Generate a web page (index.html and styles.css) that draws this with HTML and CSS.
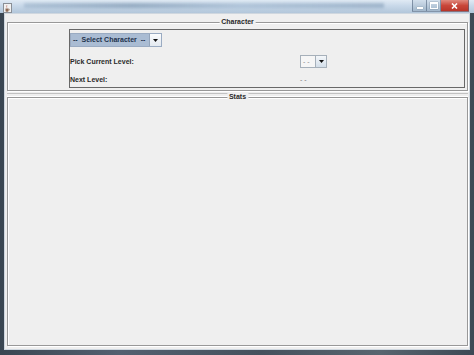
FILE: index.html
```html
<!DOCTYPE html>
<html>
<head>
<meta charset="utf-8">
<link rel="stylesheet" href="styles.css">
</head>
<body>
<div class="window">
  <div class="titlebar">
    <svg class="app-icon" width="9" height="10" viewBox="0 0 9 10">
      <rect x="0.5" y="0.5" width="8" height="9" fill="#f1f1f1" stroke="#8a8f96"/>
      <path d="M2.5 5.5h3v2.2a1 1 0 0 1-1 1h-1a1 1 0 0 1-1-1z" fill="#8d6a55"/>
      <path d="M5.5 6.2h0.8v1h-0.8" fill="none" stroke="#8d6a55" stroke-width="0.6"/>
      <path d="M3.6 2.2c0.8 0.8-0.6 1.4 0.2 2.4" fill="none" stroke="#b0574a" stroke-width="0.6"/>
    </svg>
    <div class="title-blur"></div>
    <div class="controls">
      <span class="ctl ctl-min"><span class="glyph-min"></span></span>
      <span class="ctl ctl-max"><span class="glyph-max"></span></span>
      <span class="ctl ctl-close">
        <svg width="7" height="6" viewBox="0 0 7 6"><path d="M1 0.5l5 5M6 0.5l-5 5" stroke="#fff" stroke-width="1.6"/></svg>
      </span>
    </div>
  </div>
  <div class="client">
    <div class="group group-character">
      <span class="group-title">Character</span>
      <div class="char-panel">
        <div class="combo combo-select">
          <span class="combo-label">--&nbsp; Select Character &nbsp;--</span>
          <span class="combo-arrow">
            <svg width="5" height="3" viewBox="0 0 5 3"><path d="M0 0h5L2.5 3z" fill="#111"/></svg>
          </span>
        </div>
        <span class="cell-empty"></span>
        <span class="field-label label-current">Pick Current Level:</span>
        <div class="combo combo-level">
          <span class="combo-label">- -</span>
          <span class="combo-arrow">
            <svg width="5" height="3" viewBox="0 0 5 3"><path d="M0 0h5L2.5 3z" fill="#111"/></svg>
          </span>
        </div>
        <span class="field-label label-next">Next Level:</span>
        <span class="next-value">- -</span>
      </div>
    </div>
    <div class="divider"></div>
    <div class="group group-stats">
      <span class="group-title">Stats</span>
    </div>
  </div>
</div>
</body>
</html>
```

FILE: styles.css
```css
html, body {
  margin: 0;
  padding: 0;
  width: 474px;
  height: 355px;
  overflow: hidden;
}

body {
  font-family: "Liberation Sans", Arial, sans-serif;
  background: #4b5763;
}

.window {
  display: flex;
  flex-direction: column;
  width: 474px;
  height: 355px;
  background: linear-gradient(to right, #3a4652 0%, #536070 25%, #45515d 55%, #58656f 80%, #3d4955 100%);
}

.titlebar {
  height: 13px;
  display: flex;
  align-items: flex-start;
  position: relative;
  background: linear-gradient(#e0eaf4 0%, #c8d8e9 45%, #b2c6da 100%);
}

.app-icon {
  margin: 3px 0 0 3px;
  flex: none;
}

.title-blur {
  margin: 3px 0 0 12px;
  width: 360px;
  height: 5px;
  background: linear-gradient(to right, rgba(110, 140, 170, 0.3), rgba(90, 120, 150, 0.45) 30%, rgba(120, 150, 180, 0.3) 60%, rgba(100, 130, 160, 0.4));
  filter: blur(1.5px);
}

.controls {
  margin-left: auto;
  margin-right: 5px;
  display: flex;
  height: 12px;
}

.ctl {
  display: flex;
  align-items: center;
  justify-content: center;
  height: 12px;
  box-sizing: border-box;
  border: 1px solid rgba(80, 100, 125, 0.6);
  border-top: none;
}

.ctl-min,
.ctl-max {
  width: 15px;
  background: linear-gradient(#d2dfec, #a2b7cb);
}

.ctl-max {
  width: 14px;
  border-left: none;
}

.ctl-close {
  width: 28px;
  border-left: none;
  background: linear-gradient(#e08a7e, #c9473a 50%, #b8352a);
}

.glyph-min {
  width: 6px;
  height: 2px;
  margin-top: 4px;
  background: #fff;
  box-shadow: 0 0 1px #4a5a6a;
}

.glyph-max {
  width: 6px;
  height: 4px;
  border: 1px solid #fff;
  border-top-width: 2px;
  box-shadow: 0 0 1px #4a5a6a;
}

.client {
  flex: 1;
  margin: 0 4px 5px 4px;
  display: flex;
  flex-direction: column;
  background: #efefef;
  border: 1px solid #cfd7df;
  padding: 0 1px 0 2px;
}

.group {
  position: relative;
  border: 1px solid #989898;
  box-shadow: inset 1px 1px 0 #ffffff, 1px 1px 0 #ffffff;
}

.group-title {
  position: absolute;
  top: -6px;
  left: 50%;
  transform: translateX(-50%);
  padding: 0 2px;
  background: #efefef;
  font-size: 7px;
  font-weight: bold;
  line-height: 9px;
  color: #2a2a2a;
  white-space: nowrap;
}

.group-character {
  margin-top: 8px;
  padding: 6px 2px 2px 61px;
}

.char-panel {
  display: grid;
  grid-template-columns: 230px auto;
  grid-template-rows: 14px 21px 17px;
  padding: 3px 0 2px 0;
  border: 1px solid #686868;
  font-size: 7px;
  font-weight: bold;
  color: #2a2a2a;
}

.combo {
  display: flex;
  box-sizing: border-box;
}

.combo-select {
  width: 92px;
  height: 14px;
  background: #aabcd3;
  border: 1px solid #9aabc2;
}

.combo-select .combo-label {
  flex: 1;
  padding-left: 2px;
  line-height: 12px;
  color: #22324c;
  white-space: nowrap;
}

.combo-arrow {
  display: flex;
  align-items: center;
  justify-content: center;
  background: linear-gradient(#fbfcfd, #e3e9f0);
  border-left: 1px solid #93a4ba;
}

.combo-select .combo-arrow {
  width: 11px;
}

.combo-level {
  align-self: end;
  width: 27px;
  height: 13px;
  border: 1px solid #a6b0ba;
  background: #f6f6f6;
}

.combo-level .combo-label {
  width: 12px;
  line-height: 11px;
  padding-left: 2px;
  color: #8a8a8a;
  font-weight: normal;
}

.combo-level .combo-arrow {
  flex: 1;
  background: linear-gradient(#f4f7fa, #d3dee9);
  border-left: 1px solid #a6b0ba;
}

.field-label {
  align-self: end;
  white-space: nowrap;
}

.label-current {
  line-height: 13px;
}

.label-next {
  line-height: 10px;
}

.next-value {
  align-self: end;
  line-height: 10px;
  font-weight: normal;
  color: #777777;
}

.divider {
  margin-top: 2px;
  height: 2px;
  border-top: 1px solid #c2c2c2;
  border-bottom: 1px solid #ffffff;
}

.group-stats {
  flex: 1;
  margin-bottom: 3px;
}
```
